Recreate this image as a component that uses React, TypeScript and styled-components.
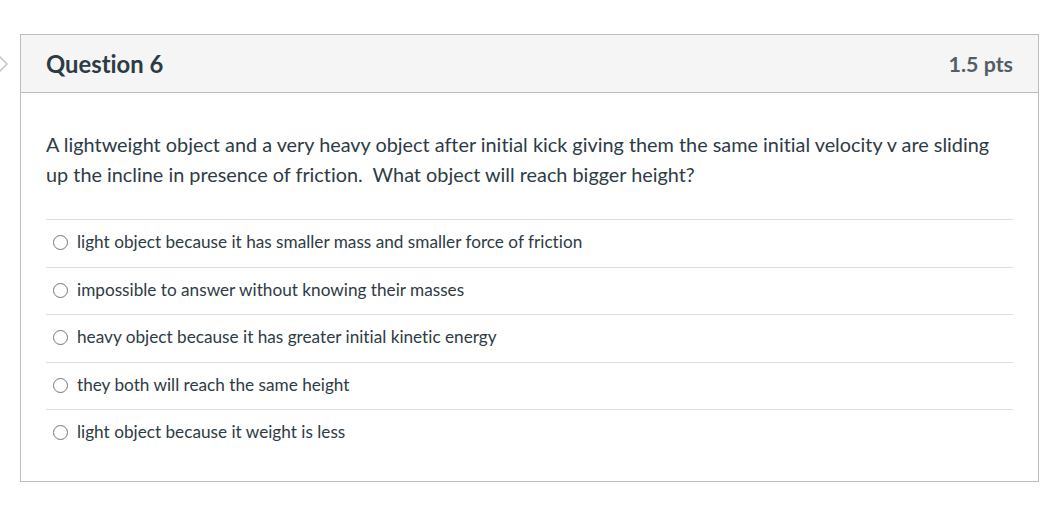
import React from 'react';
import styled, { createGlobalStyle } from 'styled-components';

const GlobalStyle = createGlobalStyle`
    body {
        margin: 0;
        background: #fff;
        font-family: Lato, "Open Sans", sans-serif;
        font-variant-ligatures: none;
        font-feature-settings: "liga" 0, "clig" 0;
        color: #2d3b45;
    }
`;

const answers = [
    'light object because it has smaller mass and smaller force of friction',
    'impossible to answer without knowing their masses',
    'heavy object because it has greater initial kinetic energy',
    'they both will reach the same height',
    'light object because it weight is less',
];

const App = () => {
    return (
        <Page>
            <GlobalStyle />
            <Chevron width="12" height="20" viewBox="0 0 12 20">
                <path d="M1 2 L9 10 L1 18" fill="none" stroke="#c4c9cc" strokeWidth="1.6" />
            </Chevron>
            <Card>
                <Header>
                    <Title>Question 6</Title>
                    <Points>1.5 pts</Points>
                </Header>
                <Body>
                    <QuestionText>
                        A lightweight object and a very heavy object after initial kick giving them the same initial velocity v are sliding up the incline in presence of friction.&nbsp; What object will reach bigger height?
                    </QuestionText>
                    <AnswerList>
                        {answers.map((a) => (
                            <Answer key={a}>
                                <Radio />
                                <AnswerText>{a}</AnswerText>
                            </Answer>
                        ))}
                    </AnswerList>
                </Body>
            </Card>
        </Page>
    );
};

const Page = styled.div`
    display: flex;
    align-items: flex-start;
    padding-top: 34px;
    width: 1039px;
`;

const Chevron = styled.svg`
    flex: none;
    margin: 20px 10px 0 -2px;
`;

const Card = styled.div`
    flex: 1;
    border: 1px solid #b9bec2;
    background: #fff;
`;

const Header = styled.div`
    display: flex;
    align-items: center;
    justify-content: space-between;
    height: 57px;
    padding: 0 25px;
    background: #f5f5f5;
    border-bottom: 1px solid #b9bec2;
`;

const Title = styled.div`
    font-size: 23.8px;
    font-weight: 700;
    color: #2d3b45;
`;

const Points = styled.div`
    font-size: 21.4px;
    font-weight: 700;
    color: #535e66;
`;

const Body = styled.div`
    padding: 36px 25px 24px;
`;

const QuestionText = styled.p`
    margin: 0 0 30px;
    font-size: 19.85px;
    line-height: 30px;
    color: #2d3b45;
`;

const AnswerList = styled.div`
    display: flex;
    flex-direction: column;
`;

const Answer = styled.div`
    display: flex;
    align-items: center;
    height: 47.5px;
    box-sizing: border-box;
    border-top: 1px solid #dcdfe1;
    padding: 0 0 3px 7px;
`;

const Radio = styled.span`
    width: 15px;
    height: 15px;
    box-sizing: border-box;
    border: 1.5px solid #73777b;
    border-radius: 50%;
    margin: 2px 9px 0 0;
    flex: none;
`;

const AnswerText = styled.span`
    font-size: 17.2px;
    color: #2d3b45;
`;

export default App;
